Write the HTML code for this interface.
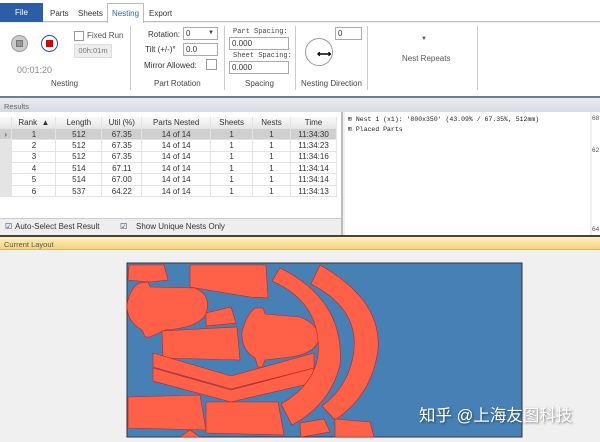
<!DOCTYPE html>
<html><head><meta charset="utf-8"><style>
*{margin:0;padding:0;box-sizing:border-box}
body{width:600px;height:442px;overflow:hidden;background:#f0f0f0;font-family:"Liberation Sans",sans-serif;font-size:8px;color:#333;position:relative}
.a{position:absolute}
.tab{position:absolute;top:9px;font-size:8px;color:#333}
.inp{position:absolute;background:#fff;border:1px solid #aaa;font-size:8px;padding-left:2px;line-height:11px;height:13px}
.mono{font-family:"Liberation Mono",monospace;font-size:7px;color:#444}
.sep{position:absolute;top:26px;width:1px;height:64px;background:#ccc}
.lbl{position:absolute;top:79px;font-size:8px;color:#444}
table{border-collapse:collapse;position:absolute;left:0;top:117px;width:337px;font-size:8px}
td,th{height:11.4px;text-align:center;font-weight:normal;border-right:1px solid #e3e3e3;border-bottom:1px solid #e3e3e3;padding:0}
th{background:linear-gradient(#fafafa,#e6e6e6);color:#333}
td{background:#fff}
td.rh{background:#e4e4e4;width:12px}
tr.sel td{background:#cfcfcf}
</style></head><body>
<div class="a" style="left:0;top:0;width:600px;height:22px;background:#fff;border-bottom:1px solid #bbb"></div>
<div class="a" style="left:0;top:3px;width:43px;height:19px;background:#2c5ea8;color:#fff;font-size:8px;text-align:center;line-height:19px">File</div>
<div class="tab" style="left:50px">Parts</div>
<div class="tab" style="left:78px">Sheets</div>
<div class="a" style="left:107px;top:3px;width:37px;height:20px;background:#fff;border:1px solid #bbb;border-bottom:none;color:#2a6aa0;font-size:8px;text-align:center;line-height:19px">Nesting</div>
<div class="tab" style="left:149px">Export</div>
<div class="a" style="left:0;top:23px;width:600px;height:73px;background:#fff"></div>
<div class="a" style="left:11px;top:35px;width:17px;height:17px;border-radius:50%;background:#ccc;border:1px solid #999"></div>
<div class="a" style="left:16px;top:40px;width:7px;height:7px;background:#999;border:1px solid #777"></div>
<div class="a" style="left:41px;top:35px;width:17px;height:17px;border-radius:50%;background:#fff;border:1px solid #2a4fa0"></div>
<div class="a" style="left:46px;top:40px;width:7px;height:7px;background:#d00"></div>
<div class="a" style="left:74px;top:31px;width:10px;height:10px;border:1px solid #999;background:#fff"></div>
<div class="a" style="left:87px;top:31px;font-size:8px;color:#555">Fixed Run</div>
<div class="a" style="left:74px;top:44px;width:38px;height:14px;background:#eee;border:1px solid #ddd;font-size:7.5px;color:#777;text-align:center;line-height:12px">00h:01m</div>
<div class="a" style="left:17px;top:65px;font-size:9px;color:#888">00:01:20</div>
<div class="lbl" style="left:51px">Nesting</div>
<div class="sep" style="left:130px"></div>
<div class="a" style="left:148px;top:30px">Rotation:</div>
<div class="inp" style="left:183px;top:27px;width:35px">0 <span style="position:absolute;right:3px;font-size:6px">▼</span></div>
<div class="a" style="left:145px;top:45px">Tilt (+/-)°</div>
<div class="inp" style="left:183px;top:43px;width:35px">0.0</div>
<div class="a" style="left:144px;top:61px">Mirror Allowed:</div>
<div class="a" style="left:206px;top:59px;width:11px;height:11px;border:1px solid #999;background:#fff"></div>
<div class="lbl" style="left:154px">Part Rotation</div>
<div class="sep" style="left:224px"></div>
<div class="a mono" style="left:233px;top:28px">Part Spacing:</div>
<div class="inp" style="left:229px;top:37px;width:60px">0.000</div>
<div class="a mono" style="left:233px;top:52px">Sheet Spacing:</div>
<div class="inp" style="left:229px;top:61px;width:60px">0.000</div>
<div class="lbl" style="left:245px">Spacing</div>
<div class="sep" style="left:295px"></div>
<div class="a" style="left:305px;top:38px;width:28px;height:28px;border-radius:50%;border:1px solid #999;background:#fff"></div>
<div class="a" style="left:317px;top:49px;font-size:10px;color:#000;font-weight:bold">⟷</div>
<div class="inp" style="left:335px;top:27px;width:27px">0</div>
<div class="lbl" style="left:301px">Nesting Direction</div>
<div class="sep" style="left:367px"></div>
<div class="a" style="left:421px;top:36px;font-size:6px;color:#555">▼</div>
<div class="a" style="left:402px;top:54px;color:#555">Nest Repeats</div>
<div class="sep" style="left:477px"></div>
<div class="a" style="left:0;top:96px;width:600px;height:2px;background:#6b7f90"></div>
<div class="a" style="left:0;top:98px;width:600px;height:14px;background:linear-gradient(#e8ecef,#d5dbe0);color:#666;font-size:7.5px;padding:4px 0 0 4px">Results</div>
<div class="a" style="left:0;top:112px;width:343px;height:124px;background:#fff;border-right:2px solid #bbb"></div>
<table>
<tr><th style="width:12px"></th><th style="width:44px">Rank &nbsp;▲</th><th style="width:46px">Length</th><th style="width:40px">Util (%)</th><th style="width:69px">Parts Nested</th><th style="width:42px">Sheets</th><th style="width:38px">Nests</th><th style="width:46px">Time</th></tr>
<tr class="sel"><td class="rh">›</td><td>1</td><td>512</td><td>67.35</td><td>14 of 14</td><td>1</td><td>1</td><td>11:34:30</td></tr>
<tr><td class="rh"></td><td>2</td><td>512</td><td>67.35</td><td>14 of 14</td><td>1</td><td>1</td><td>11:34:23</td></tr>
<tr><td class="rh"></td><td>3</td><td>512</td><td>67.35</td><td>14 of 14</td><td>1</td><td>1</td><td>11:34:16</td></tr>
<tr><td class="rh"></td><td>4</td><td>514</td><td>67.11</td><td>14 of 14</td><td>1</td><td>1</td><td>11:34:14</td></tr>
<tr><td class="rh"></td><td>5</td><td>514</td><td>67.00</td><td>14 of 14</td><td>1</td><td>1</td><td>11:34:14</td></tr>
<tr><td class="rh"></td><td>6</td><td>537</td><td>64.22</td><td>14 of 14</td><td>1</td><td>1</td><td>11:34:13</td></tr>
</table>
<div class="a" style="left:0;top:218px;width:341px;height:18px;background:#eee;border-top:1px solid #ccc"></div>
<div class="a" style="left:5px;top:222px;color:#336">☑</div>
<div class="a" style="left:15px;top:222px;color:#333">Auto-Select Best Result</div>
<div class="a" style="left:120px;top:222px;color:#336">☑</div>
<div class="a" style="left:136px;top:222px;color:#333">Show Unique Nests Only</div>
<div class="a" style="left:345px;top:112px;width:245px;height:124px;background:#fff"></div>
<div class="a mono" style="left:348px;top:115px;font-size:6.5px;color:#222">⊞ Nest 1 (x1): '800x350' (43.09% / 67.35%, 512mm)</div>
<div class="a mono" style="left:348px;top:125px;font-size:6.5px;color:#222">⊞ Placed Parts</div>
<div class="a" style="left:592px;top:112px;width:8px;height:124px;background:#fff;font-size:6.5px;color:#555"><div style="position:absolute;top:3px">68</div><div style="position:absolute;top:35px">62</div><div style="position:absolute;top:114px">64</div></div>
<div class="a" style="left:0;top:235px;width:600px;height:2px;background:#444"></div>
<div class="a" style="left:0;top:237px;width:600px;height:13px;background:linear-gradient(#fdf0c4,#f5d27c);border-bottom:1px solid #d9b56a;color:#555;font-size:7.5px;padding:3px 0 0 4px">Current Layout</div>
<svg class="a" style="left:0;top:0" width="600" height="442">
<rect x="127" y="263" width="395" height="174" fill="#4680b5" stroke="#333" stroke-width="1"/>
<g fill="#fe6148" stroke="#c1221a" stroke-width="0.6">
<path d="M129 265 L164 265 L168 280 L149 282 L128 280 Z"/>
<path d="M190 265 L266 265 L268 298 L250 297 L190 287 Z"/>
<path d="M140 283 L148 282 L150 287 L195 288 Q212 295 206 314 Q198 328 165 330 L150 337 L145 337 L142 330 Q127 322 127 305 Q130 287 140 283 Z"/>
<path d="M206 313 L231 307 L236 323 L206 326 Z"/>
<path d="M162 331 L237 327 L240 360 L163 358 Z"/>
<path d="M255 308 L263 308 L265 314 L300 317 Q320 325 319 340 Q314 354 290 357 L265 360 L262 367 L258 367 L255 358 Q241 350 242 332 Q246 315 255 308 Z"/>
<path d="M153 353 L231 376 L314 353 L314 368 L231 389 L153 367 Z"/>
<path d="M153 368 L231 390 L314 368 L312 383 L231 402 L153 381 Z"/>
<path d="M280 268 Q345 300 340 365 Q330 405 292 425 L281 404 Q314 385 318 355 Q322 303 272 281 Z"/>
<path d="M320 265 Q382 300 378 350 Q372 395 335 420 L322 406 Q350 385 354 350 Q358 308 311 284 Z"/>
<path d="M128 397 L200 395 L206 430 L128 428 Z"/>
<path d="M206 402 L278 402 L284 435 L206 433 Z"/>
<path d="M300 423 L324 419 L330 432 L301 437 Z"/>
<path d="M335 419 L370 422 L374 437 L335 437 Z"/>
<path d="M180 437 L190 430 L200 437 Z"/>
</g>
</svg>
<div class="a" style="left:419px;top:402px;font-family:'Liberation Sans','Noto Sans CJK SC',sans-serif;font-size:16.5px;color:#fff;text-shadow:1px 1px 2px rgba(0,0,0,0.5);white-space:nowrap">知乎 @上海友图科技</div>
</body></html>
